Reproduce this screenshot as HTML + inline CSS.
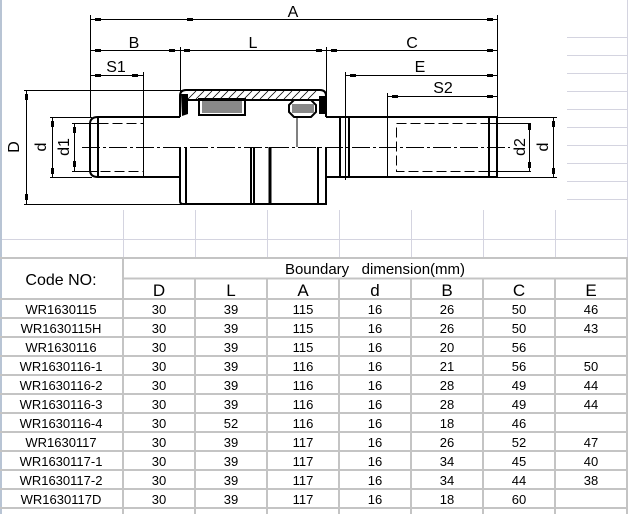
<!DOCTYPE html>
<html><head><meta charset="utf-8"><style>
html,body{margin:0;padding:0;background:#fff;}
svg{display:block;font-family:"Liberation Sans",Arial,sans-serif;}
</style></head><body>
<svg width="630" height="514" viewBox="0 0 630 514" xmlns="http://www.w3.org/2000/svg">
<rect width="630" height="514" fill="#fff"/>
<rect x="0" y="0" width="2" height="514" fill="#b8c4d4"/>
<g stroke="#d4d4e0" stroke-width="1">
<line x1="567" y1="37.5" x2="627" y2="37.5"/><line x1="567" y1="55.5" x2="627" y2="55.5"/>
<line x1="567" y1="73.5" x2="627" y2="73.5"/><line x1="567" y1="91.5" x2="627" y2="91.5"/>
<line x1="567" y1="109.5" x2="627" y2="109.5"/><line x1="567" y1="127.5" x2="627" y2="127.5"/>
<line x1="567" y1="145.5" x2="627" y2="145.5"/><line x1="567" y1="163.5" x2="627" y2="163.5"/>
<line x1="567" y1="181.5" x2="627" y2="181.5"/><line x1="567" y1="199.5" x2="627" y2="199.5"/>
<line x1="2" y1="239.5" x2="627" y2="239.5"/>
<line x1="123.5" y1="210" x2="123.5" y2="258"/><line x1="195.5" y1="210" x2="195.5" y2="258"/>
<line x1="267.5" y1="210" x2="267.5" y2="258"/><line x1="339.5" y1="210" x2="339.5" y2="258"/>
<line x1="411.5" y1="210" x2="411.5" y2="258"/><line x1="483.5" y1="210" x2="483.5" y2="258"/>
<line x1="555.5" y1="210" x2="555.5" y2="258"/><line x1="627.5" y1="0" x2="627.5" y2="258"/>
</g>
<g stroke="#000" fill="none" stroke-width="1">
<line x1="90" y1="19.5" x2="497" y2="19.5"/>
<line x1="90" y1="50.5" x2="497" y2="50.5"/>
<line x1="90" y1="75.5" x2="143" y2="75.5"/>
<line x1="345" y1="75.5" x2="497" y2="75.5"/>
<line x1="387" y1="96.5" x2="497" y2="96.5"/>
<line x1="90.5" y1="15" x2="90.5" y2="118"/>
<line x1="497.5" y1="15" x2="497.5" y2="118"/>
<line x1="180.5" y1="47" x2="180.5" y2="117"/>
<line x1="326.5" y1="47" x2="326.5" y2="117"/>
<line x1="143.5" y1="72" x2="143.5" y2="176"/>
<line x1="345.5" y1="72" x2="345.5" y2="180"/>
<line x1="387.5" y1="93" x2="387.5" y2="176"/>
<line x1="24" y1="90.5" x2="182" y2="90.5"/>
<line x1="24" y1="204.5" x2="182" y2="204.5"/>
<line x1="26.5" y1="90" x2="26.5" y2="204"/>
<line x1="50" y1="117.5" x2="92" y2="117.5"/>
<line x1="50" y1="177.5" x2="92" y2="177.5"/>
<line x1="52.5" y1="117" x2="52.5" y2="177"/>
<line x1="72" y1="123.5" x2="98" y2="123.5"/>
<line x1="72" y1="171.5" x2="98" y2="171.5"/>
<line x1="74.5" y1="123" x2="74.5" y2="171"/>
<line x1="497" y1="117.5" x2="557" y2="117.5"/>
<line x1="497" y1="177.5" x2="557" y2="177.5"/>
<line x1="553.5" y1="117" x2="553.5" y2="177"/>
<line x1="489" y1="123.5" x2="531" y2="123.5"/>
<line x1="489" y1="171.5" x2="531" y2="171.5"/>
<line x1="529.5" y1="123" x2="529.5" y2="171"/>
<line x1="82" y1="147.5" x2="510" y2="147.5" stroke-dasharray="18,3,3,3"/>
<rect x="98.5" y="123.5" width="45" height="48" stroke-dasharray="10,4"/>
<rect x="396.5" y="123.5" width="92" height="48" stroke-dasharray="10,4"/>
</g>
<g fill="#000">
<rect x="95" y="18" width="6" height="3"/><rect x="187" y="18" width="6" height="3"/><rect x="487" y="18" width="6" height="3"/>
<rect x="95" y="49" width="6" height="3"/><rect x="169" y="49" width="6" height="3"/><rect x="184" y="49" width="6" height="3"/>
<rect x="316" y="49" width="6" height="3"/><rect x="331" y="49" width="6" height="3"/><rect x="487" y="49" width="6" height="3"/>
<rect x="95" y="74" width="6" height="3"/><rect x="132" y="74" width="6" height="3"/>
<rect x="350" y="74" width="6" height="3"/><rect x="487" y="74" width="6" height="3"/>
<rect x="392" y="95" width="6" height="3"/><rect x="487" y="95" width="6" height="3"/>
<rect x="25" y="94" width="3" height="6"/><rect x="25" y="194" width="3" height="6"/>
<rect x="51" y="121" width="3" height="6"/><rect x="51" y="168" width="3" height="6"/>
<rect x="73" y="127" width="3" height="6"/><rect x="73" y="161" width="3" height="6"/>
<rect x="528" y="124" width="3" height="6"/><rect x="528" y="162" width="3" height="6"/>
<rect x="552" y="121" width="3" height="6"/><rect x="552" y="168" width="3" height="6"/>
</g>
<g stroke="#000" fill="none" stroke-width="2">
<path d="M98 117 H180 M98 177 H180"/>
<path d="M98 117 Q90 117 90 124 V170 Q90 177 98 177 Z"/>
<line x1="98" y1="117" x2="98" y2="177"/>
<path d="M326 117 H489 M326 177 H489"/>
<path d="M489 117 H497 V177 H489 Z"/>
<line x1="340" y1="117" x2="340" y2="177"/><line x1="349" y1="117" x2="349" y2="177"/>
<path d="M180 147 V201 Q180 204 183 204 H326 V147"/>
<line x1="186" y1="147" x2="186" y2="204"/>
<line x1="251" y1="147" x2="251" y2="204"/>
<line x1="254" y1="147" x2="254" y2="204"/>
<line x1="270" y1="147" x2="270" y2="204" stroke-width="3"/>
<line x1="318" y1="147" x2="318" y2="204"/>
<path d="M180 117 V96 Q180 90 186 90 H320 Q326 90 326 96 V117"/>
<line x1="186" y1="100" x2="320" y2="100"/>
<rect x="199" y="99" width="46" height="16"/>
<path d="M289 105 L294 100 H311 L316 105 V112 L311 117 H294 L289 112 Z"/>
</g>
<g stroke="#000" stroke-width="0.8">
<path d="M188 99 L196 91 M196 99 L204 91 M204 99 L212 91 M212 99 L220 91 M220 99 L228 91 M228 99 L236 91 M236 99 L244 91 M244 99 L252 91 M252 99 L260 91 M260 99 L268 91 M268 99 L276 91 M276 99 L284 91 M284 99 L292 91 M292 99 L300 91 M300 99 L308 91 M308 99 L316 91"/>
</g>
<rect x="202" y="101" width="40" height="12" fill="#888"/>
<rect x="292" y="104" width="22" height="9" fill="#888"/>
<path d="M181 94 L188 94 L188 114 L182 116 Z" fill="#000"/>
<path d="M319 96 L325 96 L325 114 L319 114 Z" fill="#000"/>
<line x1="297" y1="117" x2="297" y2="147" stroke="#000"/>
<g font-size="16" fill="#000" text-anchor="middle">
<text x="293" y="17">A</text>
<text x="134" y="48">B</text>
<text x="253" y="48">L</text>
<text x="412" y="48">C</text>
<text x="116" y="72">S1</text>
<text x="420" y="72">E</text>
<text x="443" y="93">S2</text>
<text transform="translate(19,147) rotate(-90)">D</text>
<text transform="translate(46,147) rotate(-90)">d</text>
<text transform="translate(69,147) rotate(-90)">d1</text>
<text transform="translate(525,147) rotate(-90)">d2</text>
<text transform="translate(548,147) rotate(-90)">d</text>
</g>
<g stroke="#c4c4c4" stroke-width="2">
<line x1="0" y1="258" x2="628" y2="258"/>
<line x1="123" y1="278.5" x2="628" y2="278.5"/>
<line x1="0" y1="299" x2="628" y2="299"/>
<line x1="0" y1="318" x2="628" y2="318"/><line x1="0" y1="337" x2="628" y2="337"/>
<line x1="0" y1="356" x2="628" y2="356"/><line x1="0" y1="375" x2="628" y2="375"/>
<line x1="0" y1="394" x2="628" y2="394"/><line x1="0" y1="413" x2="628" y2="413"/>
<line x1="0" y1="432" x2="628" y2="432"/><line x1="0" y1="451" x2="628" y2="451"/>
<line x1="0" y1="470" x2="628" y2="470"/><line x1="0" y1="489" x2="628" y2="489"/>
<line x1="0" y1="508" x2="628" y2="508"/>
<line x1="123" y1="258" x2="123" y2="514"/>
<line x1="195" y1="278" x2="195" y2="514"/><line x1="267" y1="278" x2="267" y2="514"/>
<line x1="339" y1="278" x2="339" y2="514"/><line x1="411" y1="278" x2="411" y2="514"/>
<line x1="483" y1="278" x2="483" y2="514"/><line x1="555" y1="278" x2="555" y2="514"/>
<line x1="627" y1="258" x2="627" y2="514"/>
</g>
<g fill="#000" text-anchor="middle">
<text x="61" y="285" font-size="16">Code NO:</text>
<text x="375" y="274" font-size="15">Boundary &#160; dimension(mm)</text>
<g font-size="17"><text x="159" y="296">D</text><text x="231" y="296">L</text><text x="303" y="296">A</text><text x="375" y="296">d</text><text x="447" y="296">B</text><text x="519" y="296">C</text><text x="591" y="296">E</text></g>
<g font-size="13">
<text x="61" y="314">WR1630115</text><text x="159" y="314">30</text><text x="231" y="314">39</text><text x="303" y="314">115</text><text x="375" y="314">16</text><text x="447" y="314">26</text><text x="519" y="314">50</text><text x="591" y="314">46</text>
<text x="61" y="333">WR1630115H</text><text x="159" y="333">30</text><text x="231" y="333">39</text><text x="303" y="333">115</text><text x="375" y="333">16</text><text x="447" y="333">26</text><text x="519" y="333">50</text><text x="591" y="333">43</text>
<text x="61" y="352">WR1630116</text><text x="159" y="352">30</text><text x="231" y="352">39</text><text x="303" y="352">115</text><text x="375" y="352">16</text><text x="447" y="352">20</text><text x="519" y="352">56</text>
<text x="61" y="371">WR1630116-1</text><text x="159" y="371">30</text><text x="231" y="371">39</text><text x="303" y="371">116</text><text x="375" y="371">16</text><text x="447" y="371">21</text><text x="519" y="371">56</text><text x="591" y="371">50</text>
<text x="61" y="390">WR1630116-2</text><text x="159" y="390">30</text><text x="231" y="390">39</text><text x="303" y="390">116</text><text x="375" y="390">16</text><text x="447" y="390">28</text><text x="519" y="390">49</text><text x="591" y="390">44</text>
<text x="61" y="409">WR1630116-3</text><text x="159" y="409">30</text><text x="231" y="409">39</text><text x="303" y="409">116</text><text x="375" y="409">16</text><text x="447" y="409">28</text><text x="519" y="409">49</text><text x="591" y="409">44</text>
<text x="61" y="428">WR1630116-4</text><text x="159" y="428">30</text><text x="231" y="428">52</text><text x="303" y="428">116</text><text x="375" y="428">16</text><text x="447" y="428">18</text><text x="519" y="428">46</text>
<text x="61" y="447">WR1630117</text><text x="159" y="447">30</text><text x="231" y="447">39</text><text x="303" y="447">117</text><text x="375" y="447">16</text><text x="447" y="447">26</text><text x="519" y="447">52</text><text x="591" y="447">47</text>
<text x="61" y="466">WR1630117-1</text><text x="159" y="466">30</text><text x="231" y="466">39</text><text x="303" y="466">117</text><text x="375" y="466">16</text><text x="447" y="466">34</text><text x="519" y="466">45</text><text x="591" y="466">40</text>
<text x="61" y="485">WR1630117-2</text><text x="159" y="485">30</text><text x="231" y="485">39</text><text x="303" y="485">117</text><text x="375" y="485">16</text><text x="447" y="485">34</text><text x="519" y="485">44</text><text x="591" y="485">38</text>
<text x="61" y="504">WR1630117D</text><text x="159" y="504">30</text><text x="231" y="504">39</text><text x="303" y="504">117</text><text x="375" y="504">16</text><text x="447" y="504">18</text><text x="519" y="504">60</text>
</g>
</g>
</svg>
</body></html>
